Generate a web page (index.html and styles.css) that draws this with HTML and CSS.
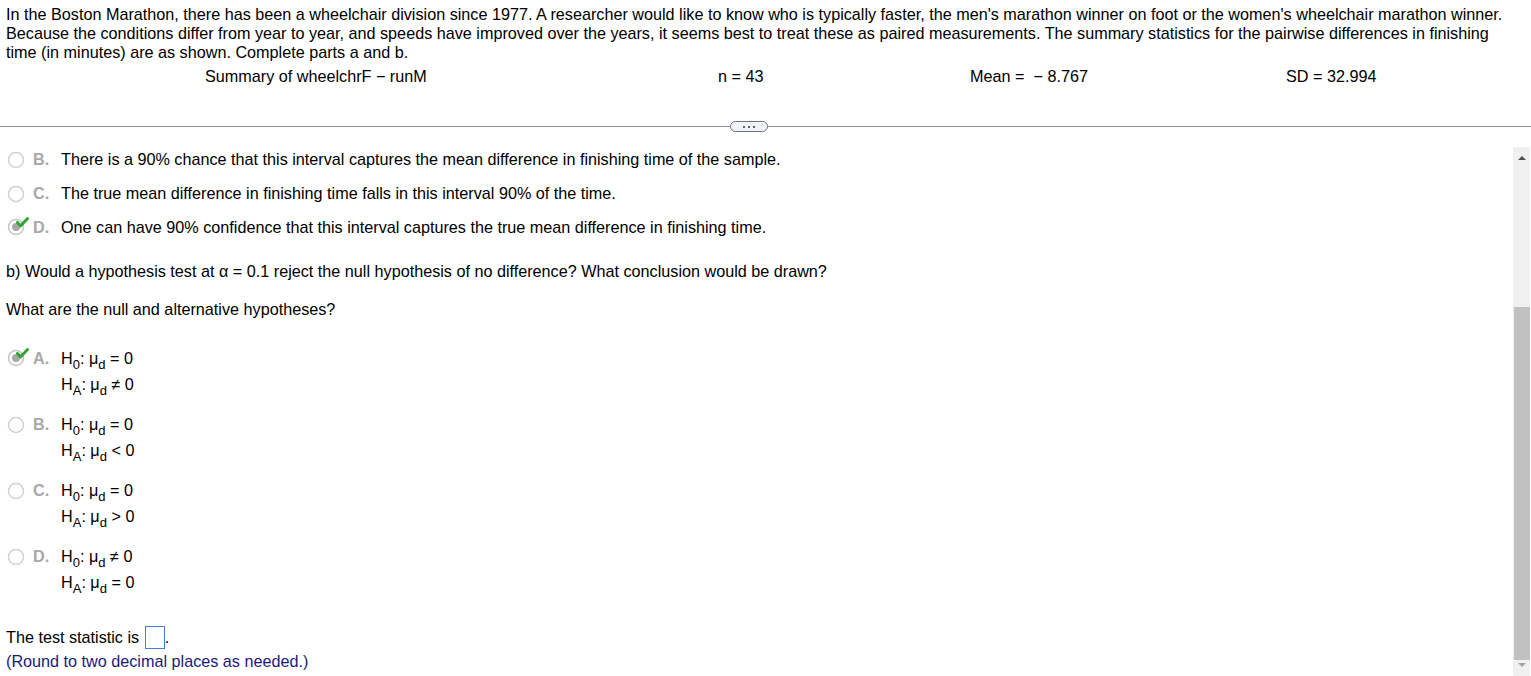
FILE: index.html
```html
<!DOCTYPE html>
<html>
<head>
<meta charset="utf-8">
<link rel="stylesheet" href="styles.css">
</head>
<body>
<div class="header">
  <p class="intro">In the Boston Marathon, there has been a wheelchair division since 1977. A researcher would like to know who is typically faster, the men's marathon winner on foot or the women's wheelchair marathon winner. Because the conditions differ from year to year, and speeds have improved over the years, it seems best to treat these as paired measurements. The summary statistics for the pairwise differences in finishing time (in minutes) are as shown. Complete parts a and b.</p>
  <div class="summary">
    <span class="c1">Summary of wheelchrF − runM</span>
    <span class="c2">n = 43</span>
    <span class="c3">Mean = &nbsp;− 8.767</span>
    <span class="c4">SD = 32.994</span>
  </div>
</div>
<div class="divider">
  <span class="pill"><i></i><i></i><i></i></span>
</div>
<div class="main">
  <div class="content">
    <div class="opt">
      <svg class="radio" width="18" height="18" viewBox="0 0 18 18"><circle cx="9" cy="9" r="7.5" fill="#fff" stroke="#d0d0d0" stroke-width="1.5"/></svg>
      <span class="letter">B.</span>
      <span>There is a 90% chance that this interval captures the mean difference in finishing time of the sample.</span>
    </div>
    <div class="opt">
      <svg class="radio" width="18" height="18" viewBox="0 0 18 18"><circle cx="9" cy="9" r="7.5" fill="#fff" stroke="#d0d0d0" stroke-width="1.5"/></svg>
      <span class="letter">C.</span>
      <span>The true mean difference in finishing time falls in this interval 90% of the time.</span>
    </div>
    <div class="opt">
      <svg class="radio sel" width="22" height="20" viewBox="0 0 22 20"><circle cx="9" cy="11" r="7.5" fill="#fff" stroke="#c4c4c4" stroke-width="1.5"/><circle cx="9" cy="11" r="4" fill="#a8a8a8"/><path d="M10.5 6.5 L13.5 10 L20.5 2.5" fill="none" stroke="#34a534" stroke-width="3" stroke-linecap="round" stroke-linejoin="round"/></svg>
      <span class="letter">D.</span>
      <span>One can have 90% confidence that this interval captures the true mean difference in finishing time.</span>
    </div>

    <p class="q1">b) Would a hypothesis test at <span class="alpha">α</span> = 0.1 reject the null hypothesis of no difference? What conclusion would be drawn?</p>
    <p class="q2">What are the null and alternative hypotheses?</p>

    <div class="hyp">
      <svg class="radio sel" width="22" height="20" viewBox="0 0 22 20"><circle cx="9" cy="11" r="7.5" fill="#fff" stroke="#c4c4c4" stroke-width="1.5"/><circle cx="9" cy="11" r="4" fill="#a8a8a8"/><path d="M10.5 6.5 L13.5 10 L20.5 2.5" fill="none" stroke="#34a534" stroke-width="3" stroke-linecap="round" stroke-linejoin="round"/></svg>
      <span class="letter">A.</span>
      <div class="lines">
        <div>H<sub>0</sub>: μ<sub>d</sub> = 0</div>
        <div>H<sub>A</sub>: μ<sub>d</sub> ≠ 0</div>
      </div>
    </div>
    <div class="hyp">
      <svg class="radio" width="18" height="18" viewBox="0 0 18 18"><circle cx="9" cy="9" r="7.5" fill="#fff" stroke="#d0d0d0" stroke-width="1.5"/></svg>
      <span class="letter">B.</span>
      <div class="lines">
        <div>H<sub>0</sub>: μ<sub>d</sub> = 0</div>
        <div>H<sub>A</sub>: μ<sub>d</sub> &lt; 0</div>
      </div>
    </div>
    <div class="hyp">
      <svg class="radio" width="18" height="18" viewBox="0 0 18 18"><circle cx="9" cy="9" r="7.5" fill="#fff" stroke="#d0d0d0" stroke-width="1.5"/></svg>
      <span class="letter">C.</span>
      <div class="lines">
        <div>H<sub>0</sub>: μ<sub>d</sub> = 0</div>
        <div>H<sub>A</sub>: μ<sub>d</sub> &gt; 0</div>
      </div>
    </div>
    <div class="hyp">
      <svg class="radio" width="18" height="18" viewBox="0 0 18 18"><circle cx="9" cy="9" r="7.5" fill="#fff" stroke="#d0d0d0" stroke-width="1.5"/></svg>
      <span class="letter">D.</span>
      <div class="lines">
        <div>H<sub>0</sub>: μ<sub>d</sub> ≠ 0</div>
        <div>H<sub>A</sub>: μ<sub>d</sub> = 0</div>
      </div>
    </div>

    <p class="stat">The test statistic is <span class="box"></span>.</p>
    <p class="round">(Round to two decimal places as needed.)</p>
  </div>
  <div class="scrollbar">
    <div class="arrow up"></div>
    <div class="track"></div>
    <div class="thumb"></div>
    <div class="arrow down"></div>
  </div>
</div>
</body>
</html>
```
FILE: styles.css
```css
html, body {
  margin: 0;
  padding: 0;
  background: #fff;
  overflow: hidden;
}
body {
  font-family: "Liberation Sans", Arial, sans-serif;
  font-size: 16.2px;
  color: #000;
  width: 1531px;
  height: 676px;
}
p { margin: 0; }
.header {
  padding: 5px 16px 0 6px;
  height: 121px;
  box-sizing: border-box;
}
.intro {
  line-height: 19px;
}
.summary {
  display: flex;
  margin-top: 5px;
  line-height: 19px;
  padding-left: 199px;
}
.summary .c1 { width: 513px; }
.summary .c2 { width: 252px; }
.summary .c3 { width: 316px; }
.divider {
  height: 1px;
  background: #8a90a6;
  display: flex;
  justify-content: center;
  align-items: center;
  margin-top: 5px;
}
.pill {
  display: flex;
  gap: 3px;
  justify-content: center;
  align-items: center;
  width: 36px;
  height: 9px;
  border: 1px solid #6c7388;
  border-radius: 6px;
  background: #f1f3f7;
  margin-left: -33px;
}
.pill i {
  display: block;
  width: 2px;
  height: 2px;
  background: #5a6075;
}
.main {
  display: flex;
  margin-top: 26px;
  height: 523px;
}
.content {
  flex: 1;
  line-height: 19px;
}
.opt {
  display: flex;
  align-items: center;
  height: 19px;
  margin-bottom: 15px;
  margin-top: -3px;
}
.opt + .opt { margin-top: 0; }
.radio {
  margin-left: 7px;
  flex: none;
}
.letter {
  color: #a8a8a8;
  font-weight: bold;
  width: 36px;
  padding-left: 8px;
  box-sizing: border-box;
  flex: none;
}
.radio.sel + .letter {
  padding-left: 4px;
  width: 32px;
}
.radio.sel { margin-top: -3px; }
.q1 {
  margin-top: 25px;
  padding-left: 6px;
}
.q2 {
  margin-top: 19px;
  padding-left: 6px;
}
.hyp {
  display: flex;
  align-items: flex-start;
  height: 52px;
  margin-bottom: 14px;
}
.q2 + .hyp { margin-top: 30px; }
.hyp .radio { margin-top: 1px; }
.hyp .radio.sel { margin-top: -2px; }
.lines div {
  height: 26px;
  line-height: 19px;
}
sub {
  font-size: 13px;
  vertical-align: -5px;
  line-height: 0;
}
.stat {
  margin-top: 27px;
  padding-left: 6px;
}
.box {
  display: inline-block;
  width: 18px;
  height: 21px;
  border: 1px solid #4a7ed6;
  vertical-align: -6px;
  margin-left: 1px;
}
.round {
  margin-top: 3px;
  padding-left: 6px;
  color: #1a1a7a;
}
.scrollbar {
  width: 17px;
  flex: none;
  margin-top: -6px;
  background: #f0f0f0;
  display: flex;
  flex-direction: column;
  align-items: center;
  margin-right: 1px;
}
.track { height: 140px; }
.arrow {
  width: 0;
  height: 0;
  border-left: 4px solid transparent;
  border-right: 4px solid transparent;
  margin: 7px 0;
}
.arrow.up {
  border-bottom: 4px solid #505050;
  margin-top: 9px;
}
.arrow.down {
  border-top: 4px solid #a3a3a3;
  margin: 3px 0;
}
.thumb {
  width: 16px;
  margin-left: 1px;
  height: 353px;
  background: #c1c1c1;
}
```
